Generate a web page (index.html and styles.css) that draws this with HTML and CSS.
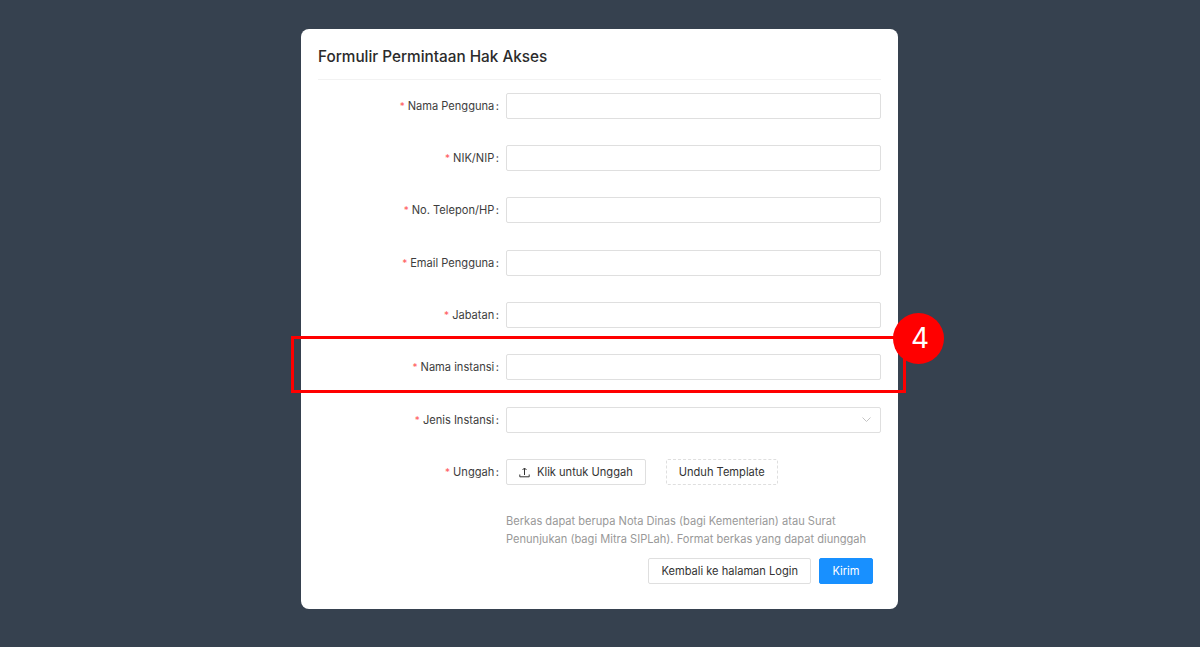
FILE: index.html
```html
<!DOCTYPE html>
<html lang="id">
<head>
    <meta charset="UTF-8">
    <meta name="viewport" content="width=device-width, initial-scale=1.0">
    <title>Formulir Permintaan Hak Akses</title>
    <link rel="stylesheet" href="styles.css">
</head>
<body>
    <div class="card">
        <h1 class="card-title">Formulir Permintaan Hak Akses</h1>
        <form class="form">
            <div class="form-row">
                <label class="form-label">Nama Pengguna</label>
                <input class="form-input" type="text">
            </div>
            <div class="form-row">
                <label class="form-label">NIK/NIP</label>
                <input class="form-input" type="text">
            </div>
            <div class="form-row">
                <label class="form-label">No. Telepon/HP</label>
                <input class="form-input" type="text">
            </div>
            <div class="form-row">
                <label class="form-label">Email Pengguna</label>
                <input class="form-input" type="text">
            </div>
            <div class="form-row">
                <label class="form-label">Jabatan</label>
                <input class="form-input" type="text">
            </div>
            <div class="form-row">
                <label class="form-label">Nama instansi</label>
                <input class="form-input" type="text">
            </div>
            <div class="form-row">
                <label class="form-label">Jenis Instansi</label>
                <div class="form-input select">
                    <svg class="select-arrow" width="9" height="9" viewBox="0 0 9 9" fill="none" stroke="#c4c4c4" stroke-width="1">
                        <path d="M0.5 2.5 L4.5 6.5 L8.5 2.5"/>
                    </svg>
                </div>
            </div>
            <div class="form-row">
                <label class="form-label">Unggah</label>
                <div class="upload-actions">
                    <button type="button" class="btn">
                        <svg class="btn-icon" width="11" height="11" viewBox="0 0 11 11" fill="none" stroke="#333" stroke-width="1">
                            <path d="M5.5 8 V1.2 M3.5 3 L5.5 1 L7.5 3 M0.8 7.5 V9.8 H10.2 V7.5"/>
                        </svg>
                        Klik untuk Unggah
                    </button>
                    <button type="button" class="btn btn-dashed">Unduh Template</button>
                </div>
            </div>
            <p class="form-hint">Berkas dapat berupa Nota Dinas (bagi Kementerian) atau Surat Penunjukan (bagi Mitra SIPLah). Format berkas yang dapat diunggah</p>
            <div class="form-footer">
                <button type="button" class="btn">Kembali ke halaman Login</button>
                <button type="submit" class="btn btn-primary">Kirim</button>
            </div>
        </form>
    </div>

    <!-- penanda langkah di atas formulir -->
    <div class="highlight-box"></div>
    <div class="step-badge">4</div>
</body>
</html>
```

FILE: styles.css
```css
* {
    margin: 0;
    padding: 0;
    box-sizing: border-box;
    font-family: Inter, 'Liberation Sans', sans-serif;
}

body {
    background-color: #36414f;
    height: 647px;
    overflow: hidden;
    position: relative;
    padding-top: 29px;
}

/* Kartu utama */
.card {
    width: 597px;
    height: 580px;
    margin-left: 301px;
    padding: 0 17px;
    background-color: #fff;
    border-radius: 8px;
}

.card-title {
    height: 51px;
    padding-top: 18px;
    border-bottom: 1px solid #f2f2f2;
    font-size: 15.3px;
    line-height: 20px;
    font-weight: 500;
    color: #2b2b2b;
}

.form {
    padding-top: 12.5px;
}

.form-row {
    display: flex;
    align-items: center;
    height: 26px;
    margin-bottom: 26.4px;
}

.form-label {
    width: 188px;
    padding-right: 7px;
    text-align: right;
    font-size: 11.1px;
    color: #3d3d3d;
    white-space: nowrap;
}

.form-label::before {
    content: '*';
    margin-right: 3px;
    font-size: 10px;
    color: #ff5a5c;
}

.form-label::after {
    content: ':';
    margin-left: 1.5px;
}

.form-input {
    flex: 1;
    height: 26px;
    border: 1px solid #dfdfdf;
    border-radius: 2px;
    background-color: #fff;
}

.select {
    display: flex;
    align-items: center;
    justify-content: flex-end;
    padding-right: 9px;
}

.upload-actions {
    display: flex;
    gap: 20px;
}

/* Tombol */
.btn {
    display: inline-flex;
    align-items: center;
    height: 26px;
    padding: 0 12px;
    border: 1px solid #dfdfdf;
    border-radius: 2px;
    background-color: #fff;
    font-size: 11.1px;
    color: #333;
    white-space: nowrap;
}

.btn-icon {
    margin-right: 7px;
}

.btn-dashed {
    border-style: dashed;
}

.btn-primary {
    justify-content: center;
    min-width: 54px;
    background-color: #1890ff;
    border-color: #1890ff;
    color: #fff;
}

.form-hint {
    margin: 3px 0 0 188px;
    font-size: 11.1px;
    line-height: 18px;
    color: #999;
}

.form-footer {
    display: flex;
    justify-content: flex-end;
    gap: 8px;
    margin-top: 10px;
    padding-right: 8px;
}

/* Penanda merah */
.highlight-box {
    position: absolute;
    left: 291px;
    top: 336px;
    width: 615px;
    height: 56.5px;
    border: 3px solid #f00;
}

.step-badge {
    position: absolute;
    left: 893px;
    top: 313px;
    width: 51px;
    height: 51px;
    padding-left: 3px;
    border-radius: 50%;
    background-color: #f00;
    color: #fff;
    font-size: 28px;
    line-height: 51px;
    text-align: center;
}
```
